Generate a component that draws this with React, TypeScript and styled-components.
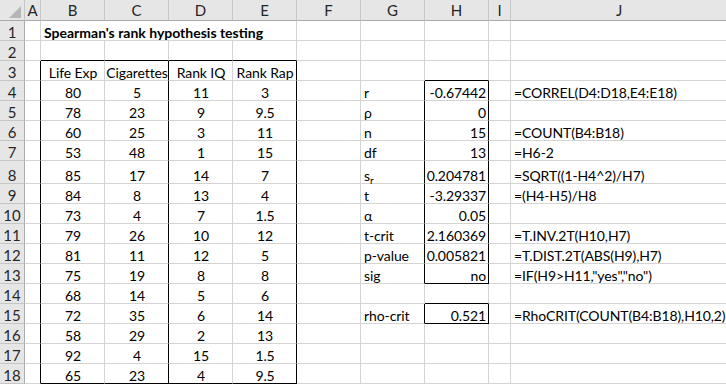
import React from "react";
import styled, { createGlobalStyle } from "styled-components";

const GlobalStyle = createGlobalStyle`
  body {
    margin: 0;
    background: #ffffff;
    overflow: hidden;
  }
`;

const Sheet = styled.div<{ $rows: number[] }>`
  display: grid;
  grid-template-columns: 25px 16px repeat(7, 64px) 22px 1fr;
  grid-template-rows: 21px ${({ $rows }) => $rows.map((h) => `${h}px`).join(" ")};
  width: 726px;
  font-family: Lato, "Open Sans", sans-serif;
  font-size: 14px;
  color: #000;
`;

const Corner = styled.div`
  box-sizing: border-box;
  background: #e6e6e6;
  border-right: 1px solid #c6c6c6;
  border-bottom: 1px solid #ababab;
  display: flex;
  overflow: hidden;
`;

const ColHead = styled.div`
  box-sizing: border-box;
  background: #e6e6e6;
  border-right: 1px solid #c6c6c6;
  border-bottom: 1px solid #ababab;
  color: #262626;
  display: flex;
  align-items: flex-end;
  justify-content: center;
  padding-bottom: 1px;
  line-height: 18px;
  font-size: 15px;
`;

const RowHead = styled.div`
  box-sizing: border-box;
  background: #e6e6e6;
  border-right: 1px solid #ababab;
  border-bottom: 1px solid #c6c6c6;
  color: #262626;
  display: flex;
  align-items: flex-end;
  justify-content: center;
  line-height: 15px;
  font-size: 15px;
`;

const Cell = styled.div<{
  $span: number;
  $align: "left" | "center" | "right";
  $bold?: boolean;
  $rb?: boolean;
  $bb?: boolean;
}>`
  box-sizing: border-box;
  grid-column: span ${({ $span }) => $span};
  border-right: 1px solid ${({ $rb }) => ($rb ? "#000" : "#d4d4d4")};
  border-bottom: 1px solid ${({ $bb }) => ($bb ? "#000" : "#d4d4d4")};
  display: flex;
  align-items: flex-end;
  justify-content: ${({ $align }) =>
    $align === "center" ? "center" : $align === "right" ? "flex-end" : "flex-start"};
  padding: 0 2px 0 3px;
  line-height: 15px;
  font-weight: ${({ $bold }) => ($bold ? 700 : 400)};
  letter-spacing: ${({ $bold }) => ($bold ? "0" : "-0.1px")};
  white-space: nowrap;
  overflow: visible;
`;

const Sub = styled.sub`
  font-size: 10px;
  vertical-align: -3px;
  line-height: 0;
`;

const COLS = ["A", "B", "C", "D", "E", "F", "G", "H", "I", "J"];

type CellData = {
  text?: React.ReactNode;
  align?: "left" | "center" | "right";
  bold?: boolean;
  span?: number;
};

const data: number[][] = [
  [80, 5, 11, 3],
  [78, 23, 9, 9.5],
  [60, 25, 3, 11],
  [53, 48, 1, 15],
  [85, 17, 14, 7],
  [84, 8, 13, 4],
  [73, 4, 7, 1.5],
  [79, 26, 10, 12],
  [81, 11, 12, 5],
  [75, 19, 8, 8],
  [68, 14, 5, 6],
  [72, 35, 6, 14],
  [58, 29, 2, 13],
  [92, 4, 15, 1.5],
  [65, 23, 4, 9.5],
];

// G / H / J columns, starting at row 4
const stats: [React.ReactNode, string, string][] = [
  ["r", "-0.67442", "=CORREL(D4:D18,E4:E18)"],
  ["ρ", "0", ""],
  ["n", "15", "=COUNT(B4:B18)"],
  ["df", "13", "=H6-2"],
  [
    <span key="sr">
      s<Sub>r</Sub>
    </span>,
    "0.204781",
    "=SQRT((1-H4^2)/H7)",
  ],
  ["t", "-3.29337", "=(H4-H5)/H8"],
  ["α", "0.05", ""],
  ["t-crit", "2.160369", "=T.INV.2T(H10,H7)"],
  ["p-value", "0.005821", "=T.DIST.2T(ABS(H9),H7)"],
  ["sig", "no", '=IF(H9>H11,"yes","no")'],
  ["", "", ""],
  ["rho-crit", "0.521", "=RhoCRIT(COUNT(B4:B18),H10,2)"],
];

const rowHeight = (r: number) => (r === 8 ? 23 : 20);

// which cells carry a black right / bottom edge
const blackRight = (r: number, c: string) => {
  if (r >= 3 && r <= 18 && (c === "A" || c === "C" || c === "E")) return true;
  if (((r >= 4 && r <= 13) || r === 15) && (c === "G" || c === "H")) return true;
  return false;
};

const blackBottom = (r: number, c: string) => {
  if ((r === 2 || r === 18) && "BCDE".includes(c)) return true;
  if (c === "H" && (r === 3 || r === 13 || r === 14 || r === 15)) return true;
  return false;
};

const cellFor = (r: number, c: string): CellData => {
  if (r === 1 && c === "B") return { text: "Spearman's rank hypothesis testing", bold: true, span: 4 };
  if (r === 3) {
    const heads: Record<string, string> = { B: "Life Exp", C: "Cigarettes", D: "Rank IQ", E: "Rank Rap" };
    if (heads[c]) return { text: heads[c], align: "center" };
  }
  if (r >= 4 && r <= 18) {
    const bi = "BCDE".indexOf(c);
    if (bi >= 0) return { text: String(data[r - 4][bi]), align: "center" };
    const s = stats[r - 4];
    if (s) {
      if (c === "G") return { text: s[0], align: "left" };
      if (c === "H") return { text: s[1], align: "right" };
      if (c === "J") return { text: s[2], align: "left" };
    }
  }
  return {};
};

export default function App() {
  const rows = Array.from({ length: 18 }, (_, i) => i + 1);
  return (
    <>
      <GlobalStyle />
      <Sheet $rows={rows.map(rowHeight)}>
        <Corner>
          <svg width="24" height="20" viewBox="0 0 24 20">
            <polygon points="21,6 21,18 9,18" fill="#b6b6b6" />
          </svg>
        </Corner>
        {COLS.map((c) => (
          <ColHead key={c}>{c}</ColHead>
        ))}
        {rows.map((r) => {
          const out: React.ReactNode[] = [<RowHead key={`h${r}`}>{r}</RowHead>];
          let skip = 0;
          COLS.forEach((c, ci) => {
            if (skip > 0) {
              skip--;
              return;
            }
            const cell = cellFor(r, c);
            const span = cell.span ?? 1;
            skip = span - 1;
            const last = COLS[ci + span - 1];
            out.push(
              <Cell
                key={`${c}${r}`}
                $span={span}
                $align={cell.align ?? "left"}
                $bold={cell.bold}
                $rb={blackRight(r, last)}
                $bb={blackBottom(r, c)}
              >
                {cell.text}
              </Cell>
            );
          });
          return out;
        })}
      </Sheet>
    </>
  );
}
